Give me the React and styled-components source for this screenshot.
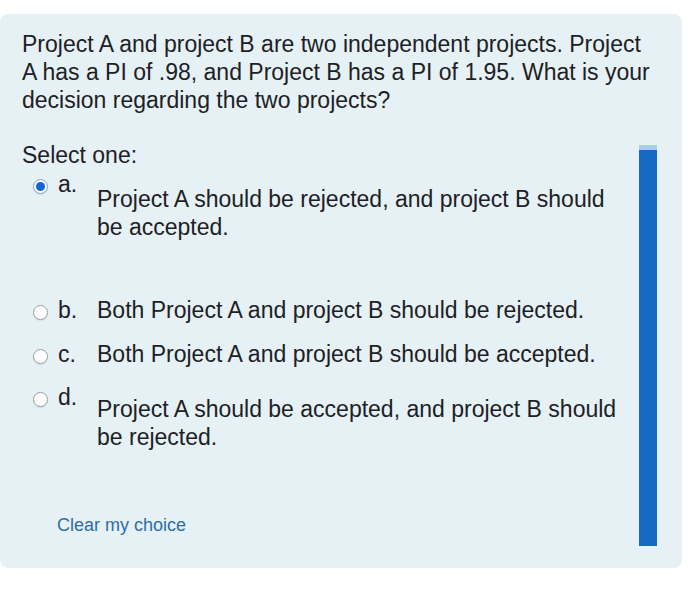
import styled, { createGlobalStyle } from "styled-components";

const GlobalStyle = createGlobalStyle`
  body {
    margin: 0;
    background: #ffffff;
    font-family: "Liberation Sans", Arial, sans-serif;
    color: #1d2125;
  }
`;

const options = [
  { key: "a", text: "Project A should be rejected, and project B should be accepted.", checked: true, drop: 15, gapAfter: 55 },
  { key: "b", text: "Both Project A and project B should be rejected.", gapAfter: 16 },
  { key: "c", text: "Both Project A and project B should be accepted.", gapAfter: 15 },
  { key: "d", text: "Project A should be accepted, and project B should be rejected.", drop: 12, gapAfter: 0 },
];

const App = () => {
  return (
    <>
      <GlobalStyle />
      <Page>
        <Card>
          <Question>
            Project A and project B are two independent projects. Project A has a PI of .98, and Project B has a PI of 1.95. What is your decision regarding the two projects?
          </Question>

          <AnswerArea>
            <Answers>
              <Prompt>Select one:</Prompt>
              {options.map((opt) => (
                <Option key={opt.key} $gapAfter={opt.gapAfter}>
                  <Radio $checked={opt.checked} />
                  <Letter>{opt.key}.</Letter>
                  <OptionText $drop={opt.drop || 0}>{opt.text}</OptionText>
                </Option>
              ))}
              <ClearLink>Clear my choice</ClearLink>
            </Answers>
            <ScrollTrack>
              <ScrollThumb />
            </ScrollTrack>
          </AnswerArea>
        </Card>
      </Page>
    </>
  );
};

export default App;


const Page = styled.div`
  width: 700px;
  height: 590px;
  padding-top: 14px;
  box-sizing: border-box;
`;

const Card = styled.div`
  width: 682px;
  height: 554px;
  box-sizing: border-box;
  background: #e6f1f5;
  border-radius: 8px;
  padding: 16px 0 0 22px;
  display: flex;
  flex-direction: column;
`;

const Question = styled.div`
  font-size: 23px;
  line-height: 28px;
  width: 634px;
  margin-bottom: 27px;
`;

const AnswerArea = styled.div`
  display: flex;
  justify-content: space-between;
  padding-right: 25px;
`;

const Answers = styled.div`
  display: flex;
  flex-direction: column;
`;

const Prompt = styled.div`
  font-size: 23px;
  line-height: 28px;
  margin-bottom: 1px;
`;

const Option = styled.div`
  display: flex;
  align-items: flex-start;
  padding-left: 11px;
  margin-bottom: ${({ $gapAfter }) => $gapAfter}px;
`;

const Radio = styled.span`
  position: relative;
  flex-shrink: 0;
  width: 15px;
  height: 15px;
  margin-top: 9px;
  border-radius: 50%;
  box-sizing: border-box;
  background: #ffffff;
  border: 1px solid ${({ $checked }) => ($checked ? "#7fa6cf" : "#9a9fa4")};
  box-shadow: 0 1px 1px rgba(0, 0, 0, 0.08);

  &::after {
    content: "";
    display: ${({ $checked }) => ($checked ? "block" : "none")};
    position: absolute;
    left: 2px;
    top: 2px;
    width: 9px;
    height: 9px;
    border-radius: 50%;
    background: #1565d8;
  }
`;

const Letter = styled.span`
  width: 39px;
  margin-left: 10px;
  flex-shrink: 0;
  font-size: 23px;
  line-height: 28px;
`;

const OptionText = styled.div`
  width: 535px;
  font-size: 23px;
  line-height: 28px;
  padding-top: ${({ $drop }) => $drop}px;
`;

const ClearLink = styled.a`
  margin-top: 62px;
  margin-left: 35px;
  font-size: 18px;
  line-height: 24px;
  color: #2f6da6;
  cursor: pointer;
`;

const ScrollTrack = styled.div`
  margin-top: 4px;
  width: 18px;
  height: 401px;
  display: flex;
  flex-direction: column;
`;

const ScrollThumb = styled.div`
  flex: 1;
  background: #1668c0;
  border-top: 5px solid #a9cdee;
`;
